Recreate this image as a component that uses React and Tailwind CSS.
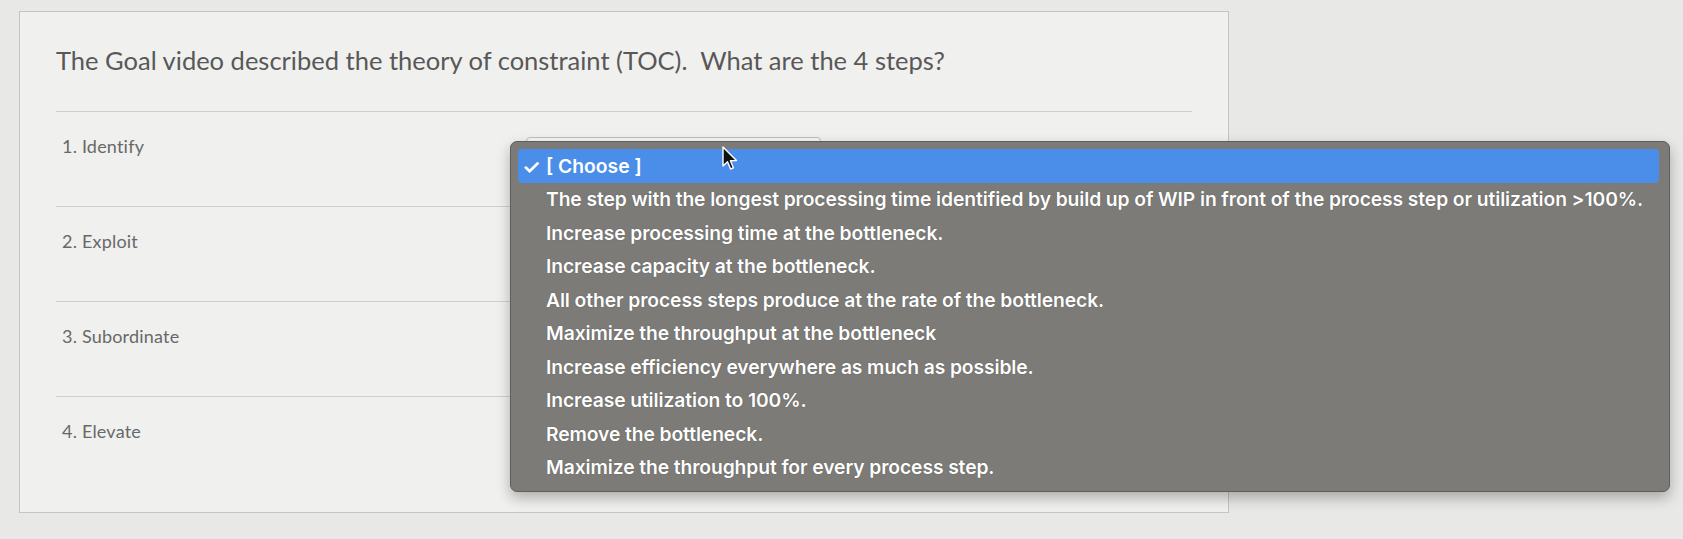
import React from 'react'

const options = [
  'The step with the longest processing time identified by build up of WIP in front of the process step or utilization >100%.',
  'Increase processing time at the bottleneck.',
  'Increase capacity at the bottleneck.',
  'All other process steps produce at the rate of the bottleneck.',
  'Maximize the throughput at the bottleneck',
  'Increase efficiency everywhere as much as possible.',
  'Increase utilization to 100%.',
  'Remove the bottleneck.',
  'Maximize the throughput for every process step.',
]

const steps = ['1. Identify', '2. Exploit', '3. Subordinate', '4. Elevate']

export default function App() {
  return (
    <div className="relative h-[539px] w-[1683px] overflow-hidden bg-[#e8e8e7]" style={{ fontFamily: 'Lato, "Open Sans", sans-serif' }}>
      <div className="ml-[19px] mt-[11px] h-[502px] w-[1210px] border border-[#c4c4c4] bg-[#f0f0ef]">
        <div className="px-[36px]">
          <p className="pt-[32px] text-[25.5px] leading-[32px] text-[#585858]">
            The Goal video described the theory of constraint (TOC).&nbsp; What are the 4 steps?
          </p>
          <div className="mt-[35px] border-t border-[#cfcfcf]" />
          {steps.map((s, i) => (
            <div key={s} className={`flex h-[95px] items-start ${i < 3 ? 'border-b border-[#cfcfcf]' : ''}`}>
              <span className="w-[470px] pl-[6px] pt-[23px] text-[18px] tracking-[0.2px] leading-[22px] text-[#686868]">{s}</span>
              {i === 0 && <div className="mt-[25px] h-[40px] w-[295px] rounded border border-[#bdbdbd] bg-[#f6f6f6]" />}
            </div>
          ))}
        </div>
      </div>

      {/* open native select menu */}
      <div
        className="absolute left-[510px] top-[141px] w-[1160px] rounded-[7px] border border-[#5f5e5c] bg-[#7c7b78] pb-[6px] pl-[7px] pr-[10px] pt-[7px] shadow-[0_6px_14px_rgba(0,0,0,0.28)]"
        style={{ fontFamily: 'Inter, "Open Sans", sans-serif' }}
      >
        <div className="flex h-[34px] items-center rounded-[4px] bg-[#4a8eea] text-[19.3px] font-semibold text-white">
          <span className="w-[28px] pl-[4px] text-[21px] leading-none">✓</span>
          <span>[ Choose ]</span>
        </div>
        {options.map((o) => (
          <div key={o} className="flex h-[33.5px] items-center pl-[28px] text-[19.3px] font-semibold tracking-[-0.1px] text-white [text-shadow:0_0_1px_rgba(0,0,0,0.4)]">
            {o}
          </div>
        ))}
      </div>

      {/* mouse pointer */}
      <svg className="absolute left-[721px] top-[146px]" width="18" height="26" viewBox="0 0 18 26">
        <path d="M2 1 L2 20 L6.5 15.8 L9.6 23 L12.4 21.8 L9.4 14.8 L15.5 14.6 Z" fill="#111" stroke="#fff" strokeWidth="1.4" strokeLinejoin="round" />
      </svg>
    </div>
  )
}
